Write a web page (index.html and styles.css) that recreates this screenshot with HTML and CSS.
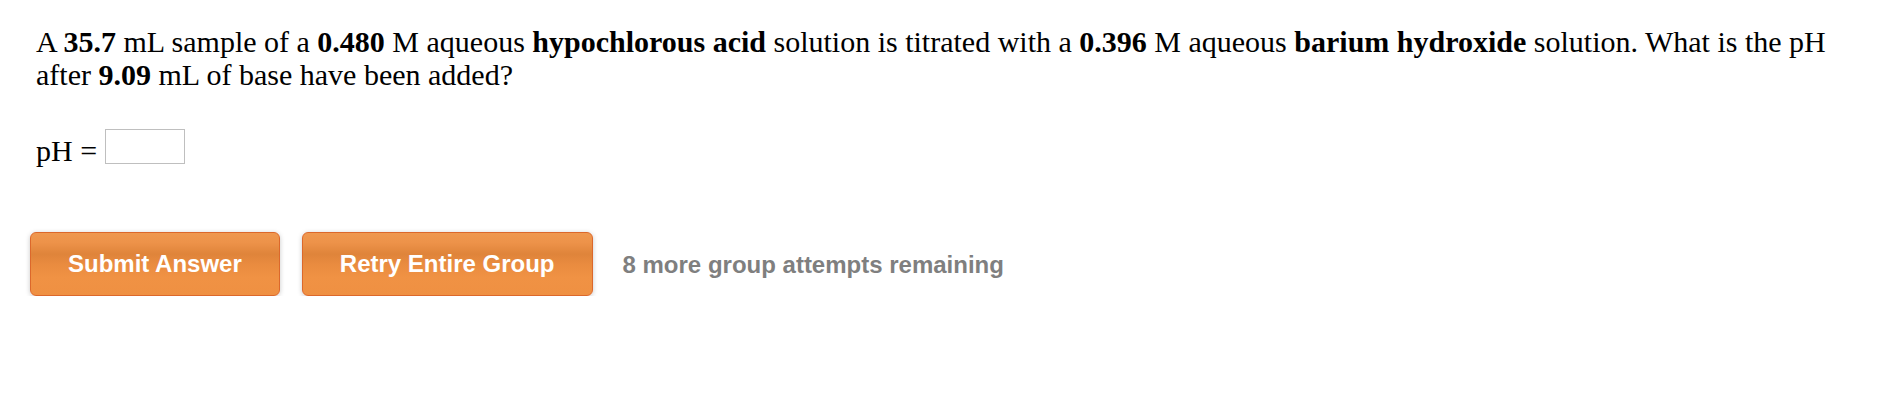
FILE: index.html
```html
<!DOCTYPE html>
<html>
<head>
<meta charset="utf-8">
<link rel="stylesheet" href="styles.css">
</head>
<body>
<div class="page">
  <p class="question">A <b>35.7</b> mL sample of a <b>0.480</b> M aqueous <b>hypochlorous acid</b> solution is titrated with a <b>0.396</b> M aqueous <b>barium hydroxide</b> solution. What is the pH after <b>9.09</b> mL of base have been added?</p>
  <div class="answer-row">
    <span class="answer-label">pH =</span>
    <input class="answer-input" type="text">
  </div>
  <div class="actions">
    <button class="btn" type="button">Submit Answer</button>
    <button class="btn" type="button">Retry Entire Group</button>
    <span class="attempts">8 more group attempts remaining</span>
  </div>
</div>
</body>
</html>
```

FILE: styles.css
```css
html, body {
  margin: 0;
  padding: 0;
  background: #ffffff;
}

.page {
  padding: 25px 30px 0 30px;
  font-family: "Liberation Serif", "Times New Roman", serif;
  color: #000;
}

.question {
  margin: 0 0 0 6px;
  width: 1830px;
  font-size: 30px;
  line-height: 33px;
}

.question b {
  font-weight: bold;
}

.answer-row {
  display: flex;
  align-items: flex-start;
  gap: 8px;
  margin: 38px 0 0 6px;
}

.answer-label {
  font-size: 30px;
  line-height: 33px;
  padding-top: 5px;
}

.answer-input {
  box-sizing: border-box;
  width: 80px;
  height: 35px;
  margin: 0;
  border: 1px solid #bfbfbf;
  border-radius: 0;
  background: #fff;
  outline: none;
}

.actions {
  display: flex;
  align-items: center;
  margin-top: 65px;
}

.btn {
  box-sizing: border-box;
  height: 64px;
  padding: 0 37px;
  margin: 0 22px 0 0;
  border: 1px solid #dc682b;
  border-radius: 6px;
  background: linear-gradient(to bottom, #ef984f 0%, #ed9249 16%, #df843a 34%, #e98b3f 50%, #f09244 72%, #ef9042 100%);
  box-shadow: 0 1px 5px rgba(0, 0, 0, 0.22);
  color: #ffffff;
  font-family: "Liberation Sans", Arial, Helvetica, sans-serif;
  font-weight: bold;
  font-size: 24px;
  line-height: 28px;
}

.btn:last-of-type {
  margin-right: 30px;
}

.attempts {
  color: #7f7f7f;
  font-family: "Liberation Sans", Arial, Helvetica, sans-serif;
  font-weight: bold;
  font-size: 24px;
  line-height: 28px;
  padding-top: 1px;
}
```
